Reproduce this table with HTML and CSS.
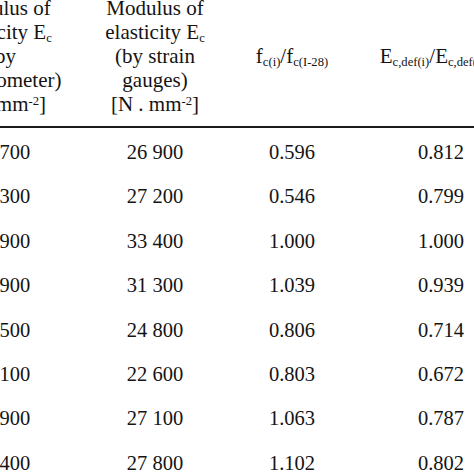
FILE: index.html
```html
<!DOCTYPE html>
<html lang="en">
<head>
<meta charset="utf-8">
<title>Modulus of elasticity table</title>
<link rel="stylesheet" href="styles.css">
</head>
<body>
<div class="sheet">
<table class="data">
<colgroup>
<col class="c1"><col class="c2"><col class="c3"><col class="c4">
</colgroup>
<thead>
<tr>
<th>Modulus of<br>elasticity E<sub>c</sub><br>(by<br>extensometer)<br>[N . mm<sup>-2</sup>]</th>
<th>Modulus of<br>elasticity E<sub>c</sub><br>(by strain<br>gauges)<br>[N . mm<sup>-2</sup>]</th>
<th>f<sub>c(i)</sub>/f<sub>c(I-28)</sub></th>
<th>E<sub>c,def(i)</sub>/E<sub>c,def(I-28)</sub></th>
</tr>
</thead>
<tbody>
<tr class="first"><td>19 700</td><td>26 900</td><td>0.596</td><td>0.812</td></tr>
<tr><td>19 300</td><td>27 200</td><td>0.546</td><td>0.799</td></tr>
<tr><td>24 900</td><td>33 400</td><td>1.000</td><td>1.000</td></tr>
<tr><td>23 900</td><td>31 300</td><td>1.039</td><td>0.939</td></tr>
<tr><td>17 500</td><td>24 800</td><td>0.806</td><td>0.714</td></tr>
<tr><td>16 100</td><td>22 600</td><td>0.803</td><td>0.672</td></tr>
<tr><td>19 900</td><td>27 100</td><td>1.063</td><td>0.787</td></tr>
<tr><td>20 400</td><td>27 800</td><td>1.102</td><td>0.802</td></tr>
</tbody>
</table>
</div>
</body>
</html>
```
FILE: styles.css
```css
html, body {
  margin: 0;
  padding: 0;
  background: #ffffff;
  overflow: hidden;
}

.sheet {
  margin: -4px 0 0 -73px;
  width: 604px;
}

.data {
  width: 604px;
  table-layout: fixed;
  border-collapse: separate;
  border-spacing: 0;
  font-family: "Liberation Serif", "Times New Roman", serif;
  color: #141414;
}

.c1 { width: 150px; }
.c2 { width: 156px; }
.c3 { width: 118px; }
.c4 { width: 180px; }

.data th {
  font-weight: normal;
  font-size: 21px;
  line-height: 24px;
  text-align: center;
  vertical-align: middle;
  padding: 0 0 10px 0;
  border-bottom: 2px solid #1a1a1a;
  white-space: nowrap;
}

.data td {
  font-size: 20.5px;
  line-height: 44.4px;
  text-align: center;
  padding: 0;
  white-space: nowrap;
}

.data .first td {
  padding-top: 2px;
}

sub {
  font-size: 0.6em;
  line-height: 0;
  vertical-align: -0.22em;
}

sup {
  font-size: 0.6em;
  line-height: 0;
  vertical-align: 0.5em;
}
```
